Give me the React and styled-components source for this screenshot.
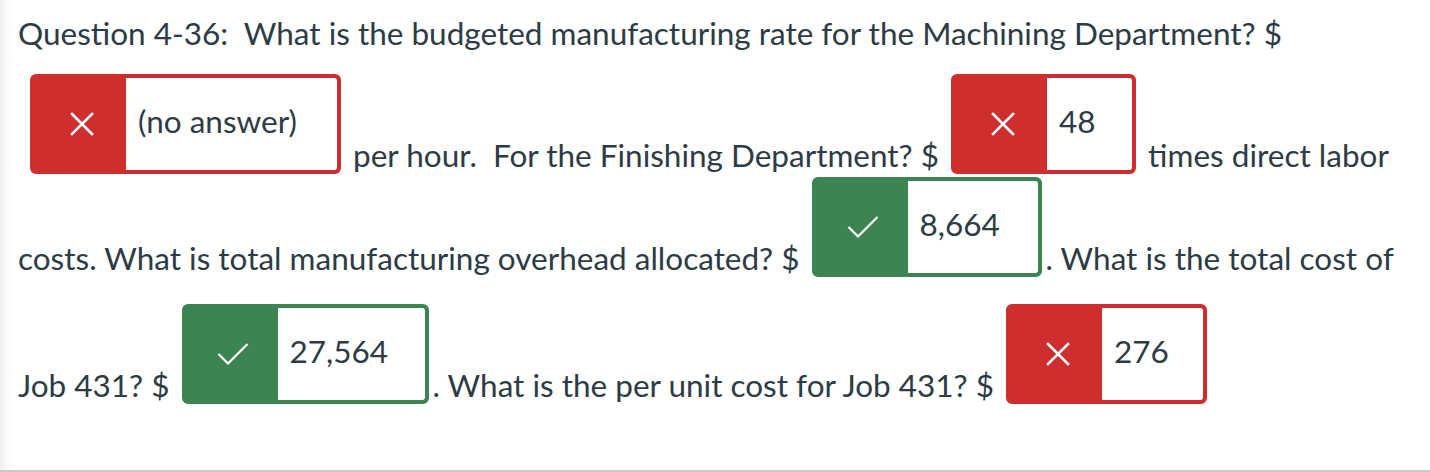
import React from "react";
import styled, { createGlobalStyle } from "styled-components";

const GlobalStyle = createGlobalStyle`
  html, body { margin: 0; padding: 0; }
  body {
    background: #fff;
    font-family: Lato, "Noto Sans", sans-serif;
    color: #2d3b45;
  }
`;

const Page = styled.div`
  box-sizing: border-box;
  height: 472px;
  padding: 11px 12px 0 18px;
  background: linear-gradient(to right, #efefef 0, #fbfbfb 8px, #fff 14px);
  border-bottom: 2px solid #c9c9c9;
  font-size: 31.5px;
`;

const Title = styled.div`
  line-height: 44px;
  white-space: pre;
`;

const Body = styled.p`
  margin: 19px 0 0 0;
  line-height: 44px;
  white-space: pre-wrap;
`;

const Answer = styled.span`
  box-sizing: border-box;
  display: inline-flex;
  vertical-align: text-bottom;
  width: ${(p) => p.$width}px;
  height: 100px;
  margin: ${(p) => p.$top || 0}px 4px 0 12px;
  border: 4px solid ${(p) => (p.$correct ? "#3c8452" : "#cf2e2e")};
  border-radius: 6px;
  background: ${(p) => (p.$correct ? "#3c8452" : "#cf2e2e")};
  overflow: hidden;
`;

const IconCell = styled.span`
  box-sizing: border-box;
  flex: 0 0 92px;
  display: flex;
  align-items: center;
  justify-content: center;
  padding-left: ${(p) => p.$shift || 0}px;
`;

const ValueCell = styled.span`
  flex: 1;
  background: #fff;
  padding: 24px 0 0 12px;
  line-height: 38px;
  white-space: nowrap;
  border-radius: 0 2px 2px 0;
`;

const Cross = () => (
  <svg width="24" height="24" viewBox="0 0 24 24" fill="none">
    <path d="M2 2 L22 22 M22 2 L2 22" stroke="#fff" strokeWidth="2.6" strokeLinecap="square" />
  </svg>
);

const Check = () => (
  <svg width="32" height="24" viewBox="0 0 32 24" fill="none">
    <path d="M1.5 12 L11 21.5 L30.5 2" stroke="#fff" strokeWidth="2.2" />
  </svg>
);

const AnswerBox = ({ correct, width, value, top }) => (
  <Answer $correct={correct} $width={width} $top={top}>
    <IconCell $shift={correct ? 2 : 3}>{correct ? <Check /> : <Cross />}</IconCell>
    <ValueCell>{value}</ValueCell>
  </Answer>
);

export default function App() {
  return (
    <>
      <GlobalStyle />
      <Page>
        <Title>Question 4-36:  What is the budgeted manufacturing rate for the Machining Department? $</Title>
        <Body>
          <AnswerBox correct={false} width={311} value="(no answer)" />
          {" per hour.  For the Finishing Department? $"}
          <AnswerBox correct={false} width={185} value="48" />
          {" times direct labor costs. What is total manufacturing overhead allocated? $"}
          <AnswerBox correct width={230} value="8,664" />
          {". What is the total cost of Job 431? $"}
          <AnswerBox correct width={247} value="27,564" top={24} />
          {". What is the per unit cost for Job 431? $"}
          <AnswerBox correct={false} width={201} value="276" />
        </Body>
      </Page>
    </>
  );
}
